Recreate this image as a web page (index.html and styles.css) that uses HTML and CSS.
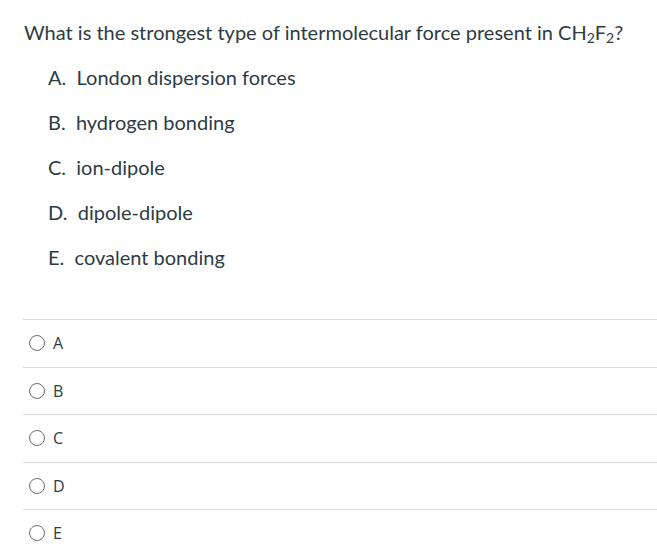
FILE: index.html
```html
<!DOCTYPE html>
<html>
<head>
<meta charset="utf-8">
<link rel="stylesheet" href="styles.css">
</head>
<body>
<div class="question">
  <p class="stem">What is the strongest type of intermolecular force present in CH<sub>2</sub>F<sub>2</sub>?</p>
  <ol class="choices">
    <li>A.&nbsp; London dispersion forces</li>
    <li>B.&nbsp; hydrogen bonding</li>
    <li>C.&nbsp; ion-dipole</li>
    <li>D.&nbsp; dipole-dipole</li>
    <li>E.&nbsp; covalent bonding</li>
  </ol>
  <div class="answers">
    <label class="answer"><span class="radio"></span><span class="lbl">A</span></label>
    <label class="answer"><span class="radio"></span><span class="lbl">B</span></label>
    <label class="answer"><span class="radio"></span><span class="lbl">C</span></label>
    <label class="answer"><span class="radio"></span><span class="lbl">D</span></label>
    <label class="answer"><span class="radio"></span><span class="lbl">E</span></label>
  </div>
</div>
</body>
</html>
```
FILE: styles.css
```css
html, body { margin: 0; padding: 0; background: #fff; }
body { font-family: Lato, "Liberation Sans", sans-serif; color: #2d3b45; }
.question { padding: 0 0 0 23px; }
.stem { margin: 0; padding-top: 19px; font-size: 20px; line-height: 26px; padding-left: 1px; }
.stem sub { font-size: 14px; vertical-align: -3px; line-height: 0; }
.choices { list-style: none; margin: 0; padding: 0 0 0 25px; }
.choices li { font-size: 20px; line-height: 24px; margin-top: 21px; }
.choices li:first-child { margin-top: 20px; }
.answers { margin-top: 50px; }
.answer { display: flex; align-items: center; height: 47.5px; border-top: 1px solid #dcdcdc; box-sizing: border-box; font-family: "Open Sans", sans-serif; font-size: 16px; }
.radio { width: 16px; height: 16px; border: 1px solid #6f6f6f; border-radius: 50%; margin-left: 6px; box-sizing: border-box; }
.lbl { margin-left: 8px; }
```
